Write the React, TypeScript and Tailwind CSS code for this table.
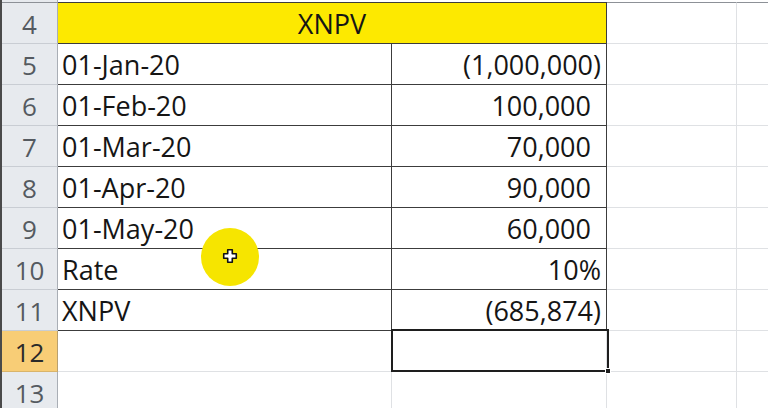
import React from "react";

type Row = { n: number; a?: string; v?: string; kind?: "neg" | "pos" | "pct" };

// rows 5..11 of the sheet, bordered table
const rows: Row[] = [
  { n: 5, a: "01-Jan-20", v: "(1,000,000)", kind: "neg" },
  { n: 6, a: "01-Feb-20", v: "100,000", kind: "pos" },
  { n: 7, a: "01-Mar-20", v: "70,000", kind: "pos" },
  { n: 8, a: "01-Apr-20", v: "90,000", kind: "pos" },
  { n: 9, a: "01-May-20", v: "60,000", kind: "pos" },
  { n: 10, a: "Rate", v: "10%", kind: "pct" },
  { n: 11, a: "XNPV", v: "(685,874)", kind: "neg" },
];

const font = { fontFamily: '"Open Sans", "Liberation Sans", sans-serif' };

const RowHeader = ({ n, active }: { n: number; active?: boolean }) => (
  <div
    className={`w-[56px] shrink-0 flex items-center justify-center pt-[2px] border-r border-b text-[26px] ${
      active
        ? "bg-[#f8cd76] border-b-[#d9b46a] border-r-[#b8a070] text-[#2a2a2a]"
        : "bg-[#e7eaee] border-b-[#c9cdd3] border-r-[#a9aeb5] text-[#555a60]"
    }`}
  >
    {n}
  </div>
);

const Filler = () => (
  <>
    <div className="w-[130px] shrink-0 border-r border-b border-[#dfe1e4]" />
    <div className="flex-1 border-b border-[#dfe1e4]" />
  </>
);

export default function App() {
  return (
    <div className="w-[768px] h-[408px] overflow-hidden bg-white relative border-l-2 border-[#4a4a4a]" style={font}>
      {/* tail of row 3 */}
      <div className="flex h-[2px]">
        <div className="w-[56px] shrink-0 bg-[#e7eaee] border-r border-[#a9aeb5]" />
        <div className="flex-1" />
      </div>

      {/* row 4: merged header */}
      <div className="flex h-[42px] text-[#151515]">
        <div className="w-[56px] shrink-0 flex items-center justify-center pt-[2px] bg-[#e7eaee] border-r border-b border-t border-b-[#c9cdd3] border-t-[#8d9197] border-r-[#a9aeb5] text-[26px] text-[#555a60]">
          4
        </div>
        <div className="w-[549px] shrink-0 bg-[#fde900] border-t border-b border-r border-[#3c3c3c] flex items-center justify-center pt-[3px] text-[27px]">
          XNPV
        </div>
        <div className="w-[130px] shrink-0 border-r border-b border-t border-b-[#dfe1e4] border-r-[#dfe1e4] border-t-[#8d9197]" />
        <div className="flex-1 border-b border-t border-b-[#dfe1e4] border-t-[#8d9197]" />
      </div>

      {rows.map((r) => (
        <div key={r.n} className="flex h-[41px] text-[#151515] text-[27px]">
          <RowHeader n={r.n} />
          <div className="w-[334px] shrink-0 border-r border-b border-[#3c3c3c] flex items-center pl-[4px] pt-[3px]">
            {r.a}
          </div>
          <div
            className={`w-[215px] shrink-0 border-r border-b border-[#3c3c3c] flex items-center justify-end pt-[3px] ${
              r.kind === "pos" ? "pr-[15px]" : "pr-[5px]"
            }`}
          >
            {r.v}
          </div>
          <Filler />
        </div>
      ))}

      {/* rows 12 and 13, empty */}
      {[12, 13].map((n) => (
        <div key={n} className="flex h-[41px]">
          <RowHeader n={n} active={n === 12} />
          <div className="w-[334px] shrink-0 border-r border-b border-[#dfe1e4]" />
          <div className="w-[215px] shrink-0 border-r border-b border-[#dfe1e4]" />
          <Filler />
        </div>
      ))}

      {/* selection on C12 */}
      <div className="absolute left-[389px] top-[329px] w-[218px] h-[43px] border-2 border-[#1e1e1e] pointer-events-none">
        <div className="absolute -right-[4px] -bottom-[4px] w-[6px] h-[6px] bg-[#1e1e1e] border border-white" />
      </div>

      {/* cursor highlight */}
      <div className="absolute left-[199px] top-[228px] w-[58px] h-[58px] rounded-full bg-[#f6e500] flex items-center justify-center pointer-events-none">
        <svg width="16" height="16" viewBox="0 0 14 14" className="mt-[-3px]">
          <path d="M5 1.5h4v3.5h3.5v4H9v3.5H5V9H1.5V5H5z" fill="#fff" stroke="#111" strokeWidth="1.4" strokeLinejoin="round" />
        </svg>
      </div>
    </div>
  );
}
